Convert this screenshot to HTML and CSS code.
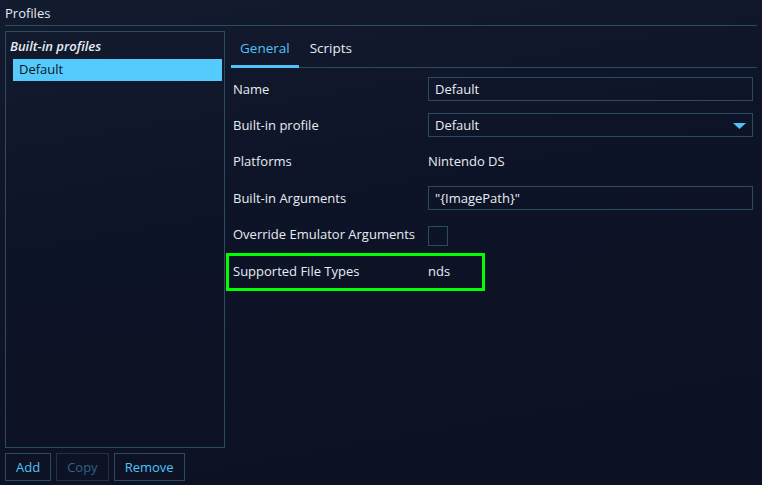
FILE: index.html
```html
<!DOCTYPE html>
<html>
<head>
<meta charset="utf-8">
<link rel="stylesheet" href="styles.css">
</head>
<body>
<div class="page">
  <div class="header">Profiles</div>
  <div class="main">
    <div class="sidebar">
      <div class="listbox">
        <div class="list-title">Built-in profiles</div>
        <div class="list-item selected">Default</div>
      </div>
      <div class="buttons">
        <button class="btn">Add</button>
        <button class="btn disabled">Copy</button>
        <button class="btn">Remove</button>
      </div>
    </div>
    <div class="content">
      <div class="tabs">
        <div class="tab active">General</div>
        <div class="tab">Scripts</div>
      </div>
      <div class="form">
        <div class="row">
          <div class="label">Name</div>
          <div class="field"><div class="input">Default</div></div>
        </div>
        <div class="row">
          <div class="label">Built-in profile</div>
          <div class="field"><div class="input select">Default<svg class="arrow" width="13" height="6" viewBox="0 0 13 6"><path d="M0 0H13L6.5 6Z" fill="#4fc3f7"/></svg></div></div>
        </div>
        <div class="row">
          <div class="label">Platforms</div>
          <div class="field"><div class="value">Nintendo DS</div></div>
        </div>
        <div class="row row-args">
          <div class="label">Built-in Arguments</div>
          <div class="field"><div class="input">"{ImagePath}"</div></div>
        </div>
        <div class="row row-check">
          <div class="label">Override Emulator Arguments</div>
          <div class="field check-field"><div class="checkbox"></div></div>
        </div>
        <div class="row highlight-row">
          <div class="highlight">
            <div class="label">Supported File Types</div>
            <div class="value">nds</div>
          </div>
        </div>
      </div>
    </div>
  </div>
</div>
</body>
</html>
```
FILE: styles.css
```css
* { box-sizing: border-box; }
html, body { margin: 0; padding: 0; }
body {
  width: 762px;
  height: 485px;
  overflow: hidden;
  background: linear-gradient(170deg, #131b2e 0%, #0e1427 40%, #0c1223 100%);
  color: #e6ecf3;
  font-family: "Open Sans", "Noto Sans", sans-serif;
  font-size: 13px;
}
.page {
  padding: 0 5px 4px 5px;
  height: 485px;
  display: flex;
  flex-direction: column;
}
.header {
  height: 26px;
  line-height: 26px;
  border-bottom: 1px solid #2b4a63;
  font-size: 13px;
}
.main {
  flex: 1;
  display: flex;
  gap: 6px;
  padding-top: 5px;
}
.sidebar {
  width: 220px;
  display: flex;
  flex-direction: column;
}
.listbox {
  flex: 1;
  border: 1px solid #2b4a63;
  padding: 4px 2px 0 7px;
}
.list-title {
  font-style: italic;
  font-weight: 600;
  height: 23px;
  line-height: 20px;
  margin-left: -3px;
}
.list-item {
  height: 22px;
  line-height: 21px;
  padding-left: 6px;
}
.list-item.selected {
  background: #55cbfd;
  color: #0d1325;
}
.buttons {
  display: flex;
  gap: 5px;
  padding-top: 5px;
}
.btn {
  height: 28px;
  background: transparent;
  border: 1px solid #2b4a63;
  color: #4fc3f7;
  font-family: inherit;
  font-size: 13px;
  padding: 0 10px;
}
.btn.disabled {
  color: #2d6284;
  border-color: #1f3246;
}
.content {
  flex: 1;
  display: flex;
  flex-direction: column;
}
.tabs {
  display: flex;
  border-bottom: 1px solid #2b4a63;
  height: 37px;
}
.tab {
  font-size: 13.5px;
  padding: 0 9px;
  line-height: 34px;
}
.tab.active {
  color: #4fc3f7;
  border-bottom: 3px solid #4fc3f7;
  margin-bottom: -1px;
}
.tab + .tab {
  padding-left: 11px;
}
.form {
  padding: 9px 4px 0 2px;
  display: flex;
  flex-direction: column;
  gap: 12px;
}
.row {
  display: flex;
  align-items: center;
  height: 24px;
}
.row-args {
  margin-top: 1px;
}
.check-field {
  display: flex;
  align-items: flex-end;
  height: 24px;
  padding-top: 2px;
}
.label {
  width: 195px;
  flex: none;
}
.field {
  flex: 1;
}
.input {
  height: 24px;
  border: 1px solid #2b4a63;
  line-height: 22px;
  padding-left: 6px;
  position: relative;
}
.arrow {
  position: absolute;
  right: 6px;
  top: 9px;
}
.checkbox {
  width: 20px;
  height: 20px;
  border: 1px solid #2b4a63;
}
.highlight-row {
  margin-left: -7px;
  margin-top: -5px;
  height: 38px;
}
.highlight {
  display: flex;
  align-items: center;
  border: 3px solid #00ff00;
  width: 259px;
  height: 38px;
  padding-left: 4px;
  padding-bottom: 3px;
}
.highlight .label {
  width: 195px;
}
```
